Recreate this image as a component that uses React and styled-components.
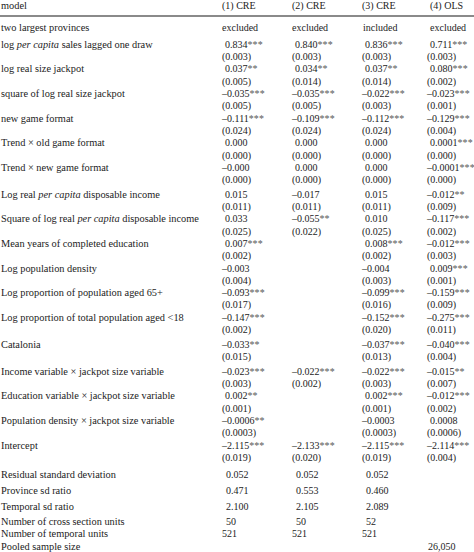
import React from "react";
import styled, { createGlobalStyle } from "styled-components";

const Global = createGlobalStyle`
  html, body { margin: 0; padding: 0; background: #ffffff; }
  body {
    font-family: "Liberation Serif", "Times New Roman", serif;
    font-size: 10px;
    color: #1c1c1c;
  }
`;

const Table = styled.div`
  width: 474px;
  overflow: hidden;
`;

const Row = styled.div`
  display: grid;
  grid-template-columns: 222px 70px 70px 65px 1fr;
  line-height: ${(p) => p.$lh || 12.3}px;
  margin-top: ${(p) => p.$mt || 0}px;
  white-space: nowrap;
`;

const Label = styled.div`
  padding-left: 1px;
  font-size: 10.35px;
`;

const Cell = styled.div`
  padding-left: ${(p) => p.$indent || 0}px;
`;

const Stars = styled.span`
  color: #5a5a5a;
  letter-spacing: 0.1px;
`;

const Rule = styled.div`
  height: 2px;
  margin-top: 3px;
  background: #8a8a8a;
`;

const rows = [
  { label: <>log <i>per capita</i> sales lagged one draw</>, c: ["0.834***", "0.840***", "0.836***", "0.711***"], se: ["(0.003)", "(0.003)", "(0.003)", "(0.003)"], mt: 4.7 },
  { label: "log real size jackpot", c: ["0.037**", "0.034**", "0.037**", "0.080***"], se: ["(0.005)", "(0.014)", "(0.014)", "(0.002)"] },
  { label: "square of log real size jackpot", c: ["–0.035***", "–0.035***", "–0.022***", "–0.023***"], se: ["(0.005)", "(0.005)", "(0.003)", "(0.001)"] },
  { label: "new game format", c: ["–0.111***", "–0.109***", "–0.112***", "–0.129***"], se: ["(0.024)", "(0.024)", "(0.024)", "(0.004)"] },
  { label: "Trend × old game format", c: ["0.000", "0.000", "0.000", "0.0001***"], se: ["(0.000)", "(0.000)", "(0.000)", "(0.000)"] },
  { label: "Trend × new game format", c: ["–0.000", "0.000", "0.000", "–0.0001***"], se: ["(0.000)", "(0.000)", "(0.000)", "(0.000)"] },
  { label: <>Log real <i>per capita</i> disposable income</>, c: ["0.015", "–0.017", "0.015", "–0.012**"], se: ["(0.011)", "(0.011)", "(0.011)", "(0.009)"], mt: 2.4 },
  { label: <>Square of log real <i>per capita</i> disposable income</>, c: ["0.033", "–0.055**", "0.010", "–0.117***"], se: ["(0.025)", "(0.022)", "(0.025)", "(0.002)"] },
  { label: "Mean years of completed education", c: ["0.007***", "", "0.008***", "–0.012***"], se: ["(0.002)", "", "(0.002)", "(0.003)"] },
  { label: "Log population density", c: ["–0.003", "", "–0.004", "0.009***"], se: ["(0.004)", "", "(0.003)", "(0.001)"] },
  { label: "Log proportion of population aged 65+", c: ["–0.093***", "", "–0.099***", "–0.159***"], se: ["(0.017)", "", "(0.016)", "(0.009)"] },
  { label: "Log proportion of total population aged <18", c: ["–0.147***", "", "–0.152***", "–0.275***"], se: ["(0.002)", "", "(0.020)", "(0.011)"] },
  { label: "Catalonia", c: ["–0.033**", "", "–0.037***", "–0.040***"], se: ["(0.015)", "", "(0.013)", "(0.004)"], mt: 2.4 },
  { label: "Income variable × jackpot size variable", c: ["–0.023***", "–0.022***", "–0.022***", "–0.015**"], se: ["(0.003)", "(0.002)", "(0.003)", "(0.007)"], mt: 2.4 },
  { label: "Education variable × jackpot size variable", c: ["0.002**", "", "0.002***", "–0.012***"], se: ["(0.001)", "", "(0.001)", "(0.002)"] },
  { label: "Population density × jackpot size variable", c: ["–0.0006**", "", "–0.0003", "0.0008"], se: ["(0.0003)", "", "(0.0003)", "(0.0006)"] },
  { label: "Intercept", c: ["–2.115***", "–2.133***", "–2.115***", "–2.114***"], se: ["(0.019)", "(0.020)", "(0.019)", "(0.004)"] },
];

const stats = [
  { label: "Residual standard deviation", c: ["0.052", "0.052", "0.052", ""], lh: 16, mt: 2.8, ind: 4 },
  { label: "Province sd ratio", c: ["0.471", "0.553", "0.460", ""], lh: 16, ind: 4 },
  { label: "Temporal sd ratio", c: ["2.100", "2.105", "2.089", ""], lh: 16, ind: 4 },
  { label: "Number of cross section units", c: ["50", "50", "52", ""], lh: 12.5, mt: 0.8, ind: 4 },
  { label: "Number of temporal units", c: ["521", "521", "521", ""], lh: 12.5, ind: 0 },
  { label: "Pooled sample size", c: ["", "", "", "26,050"], lh: 12.5, ind: 0 },
];

function Value({ v }) {
  const m = v.match(/^(.*?)(\**)$/);
  return (
    <>
      {m[1]}
      {m[2] && <Stars>{m[2]}</Stars>}
    </>
  );
}

const indentFor = (v) => (/^\d/.test(v) ? 3 : 0);

export default function App() {
  return (
    <>
      <Global />
      <Table>
        <Row $lh={12}>
          <Label>model</Label>
          <Cell>(1) CRE</Cell>
          <Cell>(2) CRE</Cell>
          <Cell>(3) CRE</Cell>
          <Cell $indent={3}>(4) OLS</Cell>
        </Row>
        <Rule />
        <Row $mt={4.85}>
          <Label>two largest provinces</Label>
          <Cell>excluded</Cell>
          <Cell>excluded</Cell>
          <Cell $indent={1}>included</Cell>
          <Cell $indent={3}>excluded</Cell>
        </Row>
        {rows.map((r, i) => (
          <React.Fragment key={i}>
            <Row $mt={r.mt}>
              <Label>{r.label}</Label>
              {r.c.map((v, j) => (
                <Cell key={j} $indent={indentFor(v)}>
                  <Value v={v} />
                </Cell>
              ))}
            </Row>
            <Row>
              <Label />
              {r.se.map((v, j) => (
                <Cell key={j}>{v}</Cell>
              ))}
            </Row>
          </React.Fragment>
        ))}
        {stats.map((s, i) => (
          <Row key={i} $lh={s.lh} $mt={s.mt}>
            <Label>{s.label}</Label>
            {s.c.map((v, j) => (
              <Cell key={j} $indent={j === 3 ? 1 : s.ind}>
                {v}
              </Cell>
            ))}
          </Row>
        ))}
      </Table>
    </>
  );
}
